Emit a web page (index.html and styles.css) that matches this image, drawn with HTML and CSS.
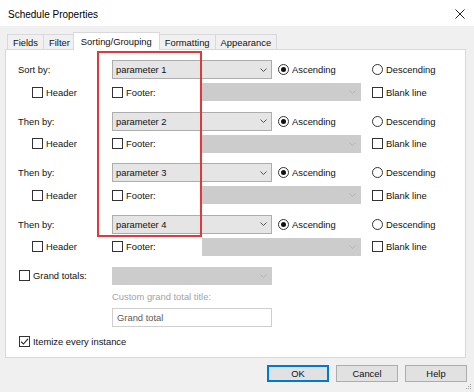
FILE: index.html
```html
<!DOCTYPE html>
<html>
<head>
<meta charset="utf-8">
<title>Schedule Properties</title>
<link rel="stylesheet" href="styles.css">
</head>
<body>
<div class="dialog">
  <div class="titlebar">
    <span class="title">Schedule Properties</span>
    <svg class="close" width="10" height="10" viewBox="0 0 10 10"><path d="M0.5 0.5L9.5 9.5M9.5 0.5L0.5 9.5" stroke="#222" stroke-width="1"/></svg>
  </div>

  <div class="tabs">
    <div class="tab">Fields</div>
    <div class="tab">Filter</div>
    <div class="tab active">Sorting/Grouping</div>
    <div class="tab">Formatting</div>
    <div class="tab">Appearance</div>
  </div>

  <div class="panel">
    <div class="group">
      <div class="label">Sort by:</div>
      <div class="combo main"><span>parameter 1</span><svg class="chev" width="7" height="4" viewBox="0 0 7 4"><path d="M0.5 0.5L3.5 3.5L6.5 0.5" fill="none" stroke="#555"/></svg></div>
      <div class="opt asc"><span class="radio on"></span>Ascending</div>
      <div class="opt desc"><span class="radio"></span>Descending</div>
      <div class="opt header"><span class="box"></span>Header</div>
      <div class="opt footer"><span class="box"></span>Footer:</div>
      <div class="combo off"><span></span><svg class="chev" width="7" height="4" viewBox="0 0 7 4"><path d="M0.5 0.5L3.5 3.5L6.5 0.5" fill="none" stroke="#b4b4b4"/></svg></div>
      <div class="opt blank"><span class="box"></span>Blank line</div>
    </div>

    <div class="group">
      <div class="label">Then by:</div>
      <div class="combo main"><span>parameter 2</span><svg class="chev" width="7" height="4" viewBox="0 0 7 4"><path d="M0.5 0.5L3.5 3.5L6.5 0.5" fill="none" stroke="#555"/></svg></div>
      <div class="opt asc"><span class="radio on"></span>Ascending</div>
      <div class="opt desc"><span class="radio"></span>Descending</div>
      <div class="opt header"><span class="box"></span>Header</div>
      <div class="opt footer"><span class="box"></span>Footer:</div>
      <div class="combo off"><span></span><svg class="chev" width="7" height="4" viewBox="0 0 7 4"><path d="M0.5 0.5L3.5 3.5L6.5 0.5" fill="none" stroke="#b4b4b4"/></svg></div>
      <div class="opt blank"><span class="box"></span>Blank line</div>
    </div>

    <div class="group">
      <div class="label">Then by:</div>
      <div class="combo main"><span>parameter 3</span><svg class="chev" width="7" height="4" viewBox="0 0 7 4"><path d="M0.5 0.5L3.5 3.5L6.5 0.5" fill="none" stroke="#555"/></svg></div>
      <div class="opt asc"><span class="radio on"></span>Ascending</div>
      <div class="opt desc"><span class="radio"></span>Descending</div>
      <div class="opt header"><span class="box"></span>Header</div>
      <div class="opt footer"><span class="box"></span>Footer:</div>
      <div class="combo off"><span></span><svg class="chev" width="7" height="4" viewBox="0 0 7 4"><path d="M0.5 0.5L3.5 3.5L6.5 0.5" fill="none" stroke="#b4b4b4"/></svg></div>
      <div class="opt blank"><span class="box"></span>Blank line</div>
    </div>

    <div class="group">
      <div class="label">Then by:</div>
      <div class="combo main"><span>parameter 4</span><svg class="chev" width="7" height="4" viewBox="0 0 7 4"><path d="M0.5 0.5L3.5 3.5L6.5 0.5" fill="none" stroke="#555"/></svg></div>
      <div class="opt asc"><span class="radio on"></span>Ascending</div>
      <div class="opt desc"><span class="radio"></span>Descending</div>
      <div class="opt header"><span class="box"></span>Header</div>
      <div class="opt footer"><span class="box"></span>Footer:</div>
      <div class="combo off"><span></span><svg class="chev" width="7" height="4" viewBox="0 0 7 4"><path d="M0.5 0.5L3.5 3.5L6.5 0.5" fill="none" stroke="#b4b4b4"/></svg></div>
      <div class="opt blank"><span class="box"></span>Blank line</div>
    </div>

    <div class="grand">
      <div class="opt gt"><span class="box"></span>Grand totals:</div>
      <div class="combo off gtcombo"><span></span><svg class="chev" width="7" height="4" viewBox="0 0 7 4"><path d="M0.5 0.5L3.5 3.5L6.5 0.5" fill="none" stroke="#b4b4b4"/></svg></div>
      <div class="gtitle">Custom grand total title:</div>
      <div class="textbox">Grand total</div>
      <div class="opt itemize"><span class="box"><svg width="9" height="9" viewBox="0 0 9 9"><path d="M1 4.6L3.4 7L8 1.8" fill="none" stroke="#222" stroke-width="1.1"/></svg></span>Itemize every instance</div>
    </div>

    <div class="highlight"></div>
  </div>

  <div class="buttons">
    <div class="btn default">OK</div>
    <div class="btn">Cancel</div>
    <div class="btn">Help</div>
  </div>

  <svg class="grip" width="6" height="6" viewBox="0 0 6 6"><rect x="4" y="0" width="1" height="1" fill="#a0a0a0"/><rect x="2" y="2" width="1" height="1" fill="#a0a0a0"/><rect x="4" y="2" width="1" height="1" fill="#a0a0a0"/><rect x="0" y="4" width="1" height="1" fill="#a0a0a0"/><rect x="2" y="4" width="1" height="1" fill="#a0a0a0"/><rect x="4" y="4" width="1" height="1" fill="#a0a0a0"/></svg>
</div>
</body>
</html>
```

FILE: styles.css
```css
* { box-sizing: border-box; }
html, body { margin: 0; padding: 0; }
body {
  font-family: "Liberation Sans", Arial, sans-serif;
  font-size: 9.4px;
  color: #111;
  background: #f0f0f0;
}
.dialog {
  position: relative;
  width: 474px;
  height: 392px;
  background: #f0f0f0;
  overflow: hidden;
}
.titlebar {
  height: 26px;
  background: #fff;
  display: flex;
  align-items: center;
  justify-content: space-between;
  padding: 2px 9px 0 8px;
}
.title { font-size: 10px; color: #000; }
.close { display: block; }

.tabs {
  display: flex;
  align-items: flex-end;
  height: 23px;
  padding-left: 7px;
}
.tab {
  height: 15px;
  padding: 0 5px;
  border: 1px solid #d9d9d9;
  border-bottom: none;
  background: #f0f0f0;
  display: flex;
  align-items: center;
  margin-right: -1px;
}
.tab.active {
  position: relative;
  z-index: 1;
  height: 18px;
  margin: 0 -1px -1px -2px;
  padding: 0 7px;
  background: #fff;
}

.panel {
  position: relative;
  margin: 0 8px 0 5px;
  background: #fff;
  border: 1px solid #d9d9d9;
  padding: 10px 0 8px 12px;
}
.group, .grand {
  display: grid;
  grid-template-columns: 14px 80px 90px 70px 6px 83px 11px 1fr;
}
.group {
  grid-template-rows: 19px 18px;
  row-gap: 4px;
  margin-bottom: 10.67px;
}
.label { grid-column: 1 / 3; grid-row: 1; display: flex; align-items: center; }
.combo {
  display: flex;
  align-items: center;
  justify-content: space-between;
  border: 1px solid #adadad;
  background: #e5e5e5;
  padding: 0 4px 0 3px;
}
.combo.main { grid-column: 3 / 5; grid-row: 1; }
.combo.off { grid-column: 4 / 7; grid-row: 2; background: #cccccc; border-color: #cccccc; }
.chev { display: block; }

.opt { display: flex; align-items: center; gap: 3px; white-space: nowrap; }
.asc { grid-column: 6 / 8; grid-row: 1; }
.desc { grid-column: 8; grid-row: 1; }
.header { grid-column: 2; grid-row: 2; }
.footer { grid-column: 3; grid-row: 2; }
.blank { grid-column: 8; grid-row: 2; }

.box {
  width: 11px;
  height: 11px;
  flex: none;
  border: 1px solid #333;
  background: #fff;
  display: flex;
  align-items: center;
  justify-content: center;
}
.radio {
  width: 11px;
  height: 11px;
  flex: none;
  border: 1px solid #333;
  border-radius: 50%;
  background: #fff;
  display: flex;
  align-items: center;
  justify-content: center;
}
.radio.on::after {
  content: "";
  width: 5px;
  height: 5px;
  border-radius: 50%;
  background: #111;
}

.grand {
  grid-template-rows: 18px 19px 23px 22px;
  margin-top: 2.33px;
}
.gt { grid-column: 1 / 3; grid-row: 1; margin-left: 1px; }
.combo.gtcombo { grid-column: 3 / 5; grid-row: 1; }
.gtitle {
  grid-column: 3 / 8;
  grid-row: 2;
  align-self: end;
  height: 14px;
  display: flex;
  align-items: center;
  color: #a3a3a3;
}
.textbox {
  grid-column: 3 / 5;
  grid-row: 3;
  align-self: end;
  height: 19px;
  border: 1px solid #cfcfcf;
  background: #fff;
  display: flex;
  align-items: center;
  padding-left: 4px;
  color: #5a5a5a;
}
.itemize { grid-column: 1 / 5; grid-row: 4; align-self: end; height: 14px; margin-left: 1px; }

.highlight {
  position: absolute;
  left: 91px;
  top: 1px;
  width: 105px;
  height: 186px;
  border: 2px solid #e0393c;
}

.buttons {
  display: flex;
  justify-content: flex-end;
  gap: 7px;
  padding-right: 7px;
  margin-top: 7px;
}
.btn {
  width: 62px;
  height: 17px;
  border: 1px solid #adadad;
  background: #e1e1e1;
  display: flex;
  align-items: center;
  justify-content: center;
}
.btn.default {
  border-color: #0078d7;
  box-shadow: inset 0 0 0 1px #0078d7;
}
.grip {
  position: absolute;
  right: 2px;
  bottom: 2px;
}
```
